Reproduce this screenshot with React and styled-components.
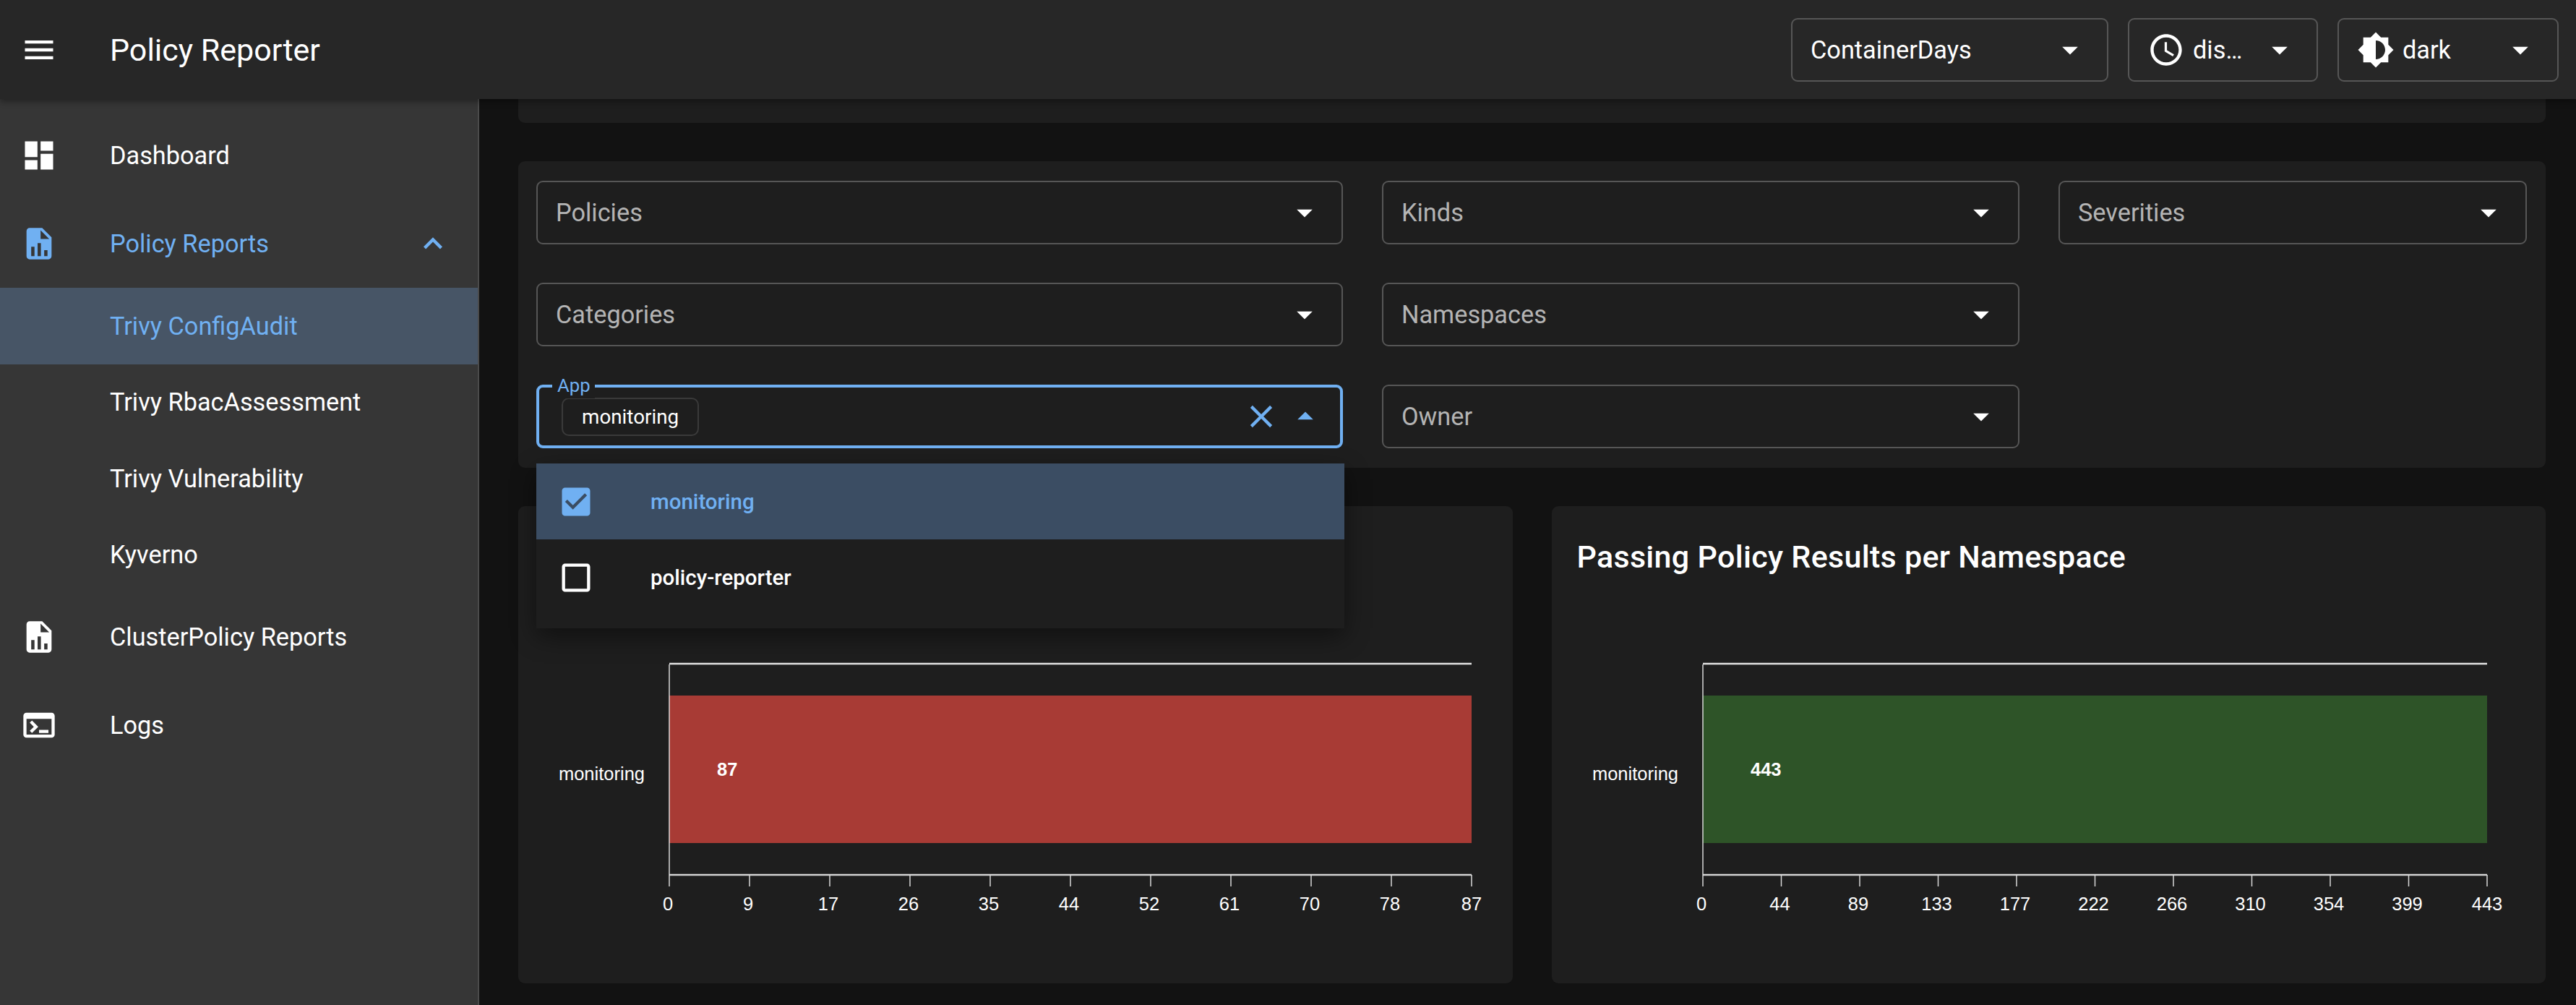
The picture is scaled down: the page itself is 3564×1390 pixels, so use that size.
import React from 'react';
import { styled, createGlobalStyle } from 'styled-components';

const BLUE = '#70b0f2';

const GlobalStyle = createGlobalStyle`
  html, body {
    margin: 0;
    padding: 0;
    height: 100%;
    background: #121212;
  }
  body {
    font-family: Roboto, "Liberation Sans", sans-serif;
    color: #fff;
    overflow: hidden;
  }
`;

const Page = styled.div`
  display: flex;
  flex-direction: column;
  height: 1390px;
  overflow: hidden;
`;

const AppBar = styled.header`
  position: relative;
  z-index: 3;
  flex: none;
  height: 137px;
  display: flex;
  align-items: center;
  padding: 0 24px 0 28px;
  box-sizing: border-box;
  background: #272727;
  box-shadow: 0 4px 8px rgba(0, 0, 0, 0.35);
`;

const AppTitle = styled.h1`
  flex: 1;
  margin: 0 0 0 72px;
  font-size: 43px;
  font-weight: 400;
  line-height: 52px;
`;

const TopSelects = styled.div`
  display: flex;
  gap: 27px;
`;

const Field = styled.div`
  position: relative;
  display: flex;
  align-items: center;
  box-sizing: border-box;
  height: 88px;
  padding: 0 0 0 25px;
  border: 2px solid #565656;
  border-radius: 9px;
  font-size: 34.3px;
  color: ${(p) => (p.$placeholder ? '#b4b4b4' : '#fff')};
  background: transparent;
  grid-column: ${(p) => (p.$span ? `span ${p.$span}` : 'auto')};
  width: ${(p) => (p.$width ? `${p.$width}px` : 'auto')};
`;

const FocusField = styled(Field)`
  border: 4px solid ${BLUE};
  padding-left: 31px;
  z-index: 2;
`;

const FieldText = styled.span`
  flex: 1;
  white-space: nowrap;
`;

const FieldIcon = styled.svg`
  flex: none;
  width: 52px;
  height: 52px;
  margin-right: ${(p) => p.$gap || 0}px;
  fill: ${(p) => p.$color || '#fff'};
`;

const Notch = styled.span`
  position: absolute;
  top: -21px;
  left: 18px;
  padding: 0 6px 0 7px;
  background: #1e1e1e;
  font-size: 25.7px;
  line-height: 36px;
  color: ${BLUE};
`;

const Chip = styled.span`
  display: inline-flex;
  align-items: center;
  box-sizing: border-box;
  height: 53px;
  padding: 0 26px;
  border: 2px solid #3a3a3a;
  border-radius: 10px;
  font-size: 27.8px;
  color: #fff;
`;

const Body = styled.div`
  flex: 1;
  display: flex;
  min-height: 0;
`;

const Sidebar = styled.nav`
  flex: none;
  box-sizing: border-box;
  width: 663px;
  padding-top: 17px;
  background: #363636;
  border-right: 2px solid #4b4b4b;
`;

const NavItem = styled.div`
  display: flex;
  align-items: center;
  height: 122px;
  padding-left: 28px;
  font-size: 34.3px;
  color: ${(p) => (p.$active ? BLUE : '#fff')};
`;

const NavIcon = styled.svg`
  flex: none;
  width: 52px;
  height: 52px;
  margin-right: 72px;
  fill: currentColor;
`;

const NavLabel = styled.span`
  flex: 1;
`;

const Chevron = styled.svg`
  flex: none;
  width: 52px;
  height: 52px;
  margin-right: 36px;
  fill: currentColor;
`;

const SubItem = styled.div`
  display: flex;
  align-items: center;
  height: 105.5px;
  padding-left: 152px;
  font-size: 34.3px;
  color: ${(p) => (p.$active ? BLUE : '#fff')};
  background: ${(p) => (p.$active ? '#475566' : 'transparent')};
`;

const Main = styled.main`
  flex: 1;
  min-width: 0;
  display: flex;
  flex-direction: column;
  gap: 53px;
  padding: 0 42px 0 54px;
`;

const CutPanel = styled.div`
  flex: none;
  height: 33px;
  background: #1e1e1e;
  border-radius: 0 0 9px 9px;
`;

const FilterPanel = styled.section`
  flex: none;
  display: grid;
  grid-template-columns: repeat(12, 1fr);
  gap: 53px 54px;
  padding: 27px 26px 27px 25px;
  background: #1e1e1e;
  border-radius: 9px;
`;

const Spacer = styled.div`
  grid-column: span 3;
`;

const AppFilter = styled.div`
  position: relative;
  grid-column: span 5;
  display: flex;
  flex-direction: column;
`;

const Dropdown = styled.div`
  position: absolute;
  z-index: 5;
  top: 109px;
  left: 0;
  right: -2px;
  padding-bottom: 18px;
  background: #1e1e1e;
  box-shadow: 0 11px 32px rgba(0, 0, 0, 0.45);
`;

const Option = styled.div`
  display: flex;
  align-items: center;
  height: 105px;
  padding-left: 29px;
  font-size: 29.5px;
  font-weight: 500;
  color: ${(p) => (p.$selected ? BLUE : '#fff')};
  background: ${(p) => (p.$selected ? '#3b4d63' : 'transparent')};
`;

const CheckIcon = styled.svg`
  flex: none;
  width: 52px;
  height: 52px;
  margin-right: 77px;
  fill: currentColor;
`;

const Charts = styled.div`
  flex: none;
  display: grid;
  grid-template-columns: 1fr 1fr;
  gap: 54px;
`;

const Card = styled.section`
  height: 660px;
  background: #1e1e1e;
  border-radius: 9px;
`;

const CardTitle = styled.h2`
  margin: 0;
  padding: 44px 35px 86px;
  font-size: 43px;
  font-weight: 500;
  line-height: 52px;
  letter-spacing: 0.3px;
`;

const ChartSvg = styled.svg`
  display: block;
  font-family: "Liberation Sans", Arial, sans-serif;
`;

const ICONS = {
  menu: 'M3 18h18v-2H3v2zm0-5h18v-2H3v2zm0-7v2h18V6H3z',
  dashboard: 'M3 13h8V3H3v10zm0 8h8v-6H3v6zm10 0h8V11h-8v10zm0-18v6h8V3h-8z',
  report:
    'M14 2H6c-1.1 0-2 .9-2 2v16c0 1.1.9 2 2 2h12c1.1 0 2-.9 2-2V8l-6-6zM13 9V3.5L18.5 9H13zM7 20v-6h2.1v6H7zm4.1 0v-8.4h2.1V20h-2.1zm4.2 0v-3.8h2.1V20h-2.1z',
  terminal:
    'M20 4H4c-1.11 0-2 .9-2 2v12c0 1.1.89 2 2 2h16c1.1 0 2-.9 2-2V6c0-1.1-.9-2-2-2zm0 14H4V8h16v10zm-2-1h-6v-2h6v2zM7.5 17l-1.41-1.41L8.67 13l-2.59-2.59L7.5 9l4 4-4 4z',
  expandLess: 'M12 8l-6 6 1.41 1.41L12 10.83l4.59 4.58L18 14z',
  down: 'M7 10l5 5 5-5z',
  up: 'M7 14l5-5 5 5z',
  close:
    'M19 6.41 17.59 5 12 10.59 6.41 5 5 6.41 10.59 12 5 17.59 6.41 19 12 13.41 17.59 19 19 17.59 13.41 12z',
  clock:
    'M11.99 2C6.47 2 2 6.48 2 12s4.47 10 9.99 10C17.52 22 22 17.52 22 12S17.52 2 11.99 2zM12 20c-4.42 0-8-3.58-8-8s3.58-8 8-8 8 3.58 8 8-3.58 8-8 8zm.5-13H11v6l5.25 3.15.75-1.23-4.5-2.67z',
  brightness:
    'M20 15.31 23.31 12 20 8.69V4h-4.69L12 .69 8.69 4H4v4.69L.69 12 4 15.31V20h4.69L12 23.31 15.31 20H20v-4.69zM12 18V6c3.31 0 6 2.69 6 6s-2.69 6-6 6z',
  checked:
    'M19 3H5c-1.11 0-2 .9-2 2v14c0 1.1.89 2 2 2h14c1.11 0 2-.89 2-2V5c0-1.11-.89-2-2-2zm-9 14l-5-5 1.41-1.41L10 14.17l7.59-7.59L19 8l-9 9z',
  unchecked:
    'M19 5v14H5V5h14m0-2H5c-1.1 0-2 .9-2 2v14c0 1.1.9 2 2 2h14c1.1 0 2-.9 2-2V5c0-1.1-.9-2-2-2z',
};

const Path = ({ name }) => <path fillRule="evenodd" d={ICONS[name]} />;

function SelectBox({ label, icon, width, span, placeholder }) {
  return (
    <Field $width={width} $span={span} $placeholder={placeholder}>
      {icon && (
        <FieldIcon viewBox="0 0 24 24" $gap={11}>
          <Path name={icon} />
        </FieldIcon>
      )}
      <FieldText>{label}</FieldText>
      <FieldIcon viewBox="0 0 24 24" $gap={25}>
        <Path name="down" />
      </FieldIcon>
    </Field>
  );
}

function BarChart({ plotRight, max, ticks, value, color }) {
  const left = 209;
  const step = (plotRight - left) / (ticks.length - 1);
  return (
    <ChartSvg width="100%" height="478">
      <rect x={left} y={80} width={plotRight - left} height={204} fill={color} />
      <line x1={left} x2={plotRight} y1={36} y2={36} stroke="#e4e4e4" strokeWidth="2.5" />
      <line x1={left} x2={plotRight} y1={328} y2={328} stroke="#d4d4d4" strokeWidth="2.5" />
      <line x1={left} x2={left} y1={37} y2={328} stroke="#d8d8d8" strokeWidth="1.5" />
      <text x={175} y={197} textAnchor="end" fontSize="25.5" fill="#fff">
        monitoring
      </text>
      <text x={left + 66} y={191} fontSize="25.5" fontWeight="700" fill="#fff">
        {max}
      </text>
      {ticks.map((t, i) => (
        <g key={t}>
          <line
            x1={left + i * step}
            x2={left + i * step}
            y1={328}
            y2={344}
            stroke="#d8d8d8"
            strokeWidth="1.5"
          />
          <text
            x={left + i * step - (i === ticks.length - 1 ? 0 : 2)}
            y={377}
            textAnchor="middle"
            fontSize="25.5"
            fill="#fff"
          >
            {t}
          </text>
        </g>
      ))}
    </ChartSvg>
  );
}

export default function App() {
  return (
    <Page>
      <GlobalStyle />
      <AppBar>
        <FieldIcon viewBox="0 0 24 24">
          <Path name="menu" />
        </FieldIcon>
        <AppTitle>Policy Reporter</AppTitle>
        <TopSelects>
          <SelectBox label="ContainerDays" width={439} />
          <SelectBox label="dis…" icon="clock" width={263} />
          <SelectBox label="dark" icon="brightness" width={306} />
        </TopSelects>
      </AppBar>
      <Body>
        <Sidebar>
          <NavItem>
            <NavIcon viewBox="0 0 24 24">
              <Path name="dashboard" />
            </NavIcon>
            <NavLabel>Dashboard</NavLabel>
          </NavItem>
          <NavItem $active>
            <NavIcon viewBox="0 0 24 24">
              <Path name="report" />
            </NavIcon>
            <NavLabel>Policy Reports</NavLabel>
            <Chevron viewBox="0 0 24 24">
              <Path name="expandLess" />
            </Chevron>
          </NavItem>
          <SubItem $active>Trivy ConfigAudit</SubItem>
          <SubItem>Trivy RbacAssessment</SubItem>
          <SubItem>Trivy Vulnerability</SubItem>
          <SubItem>Kyverno</SubItem>
          <NavItem>
            <NavIcon viewBox="0 0 24 24">
              <Path name="report" />
            </NavIcon>
            <NavLabel>ClusterPolicy Reports</NavLabel>
          </NavItem>
          <NavItem>
            <NavIcon viewBox="0 0 24 24">
              <Path name="terminal" />
            </NavIcon>
            <NavLabel>Logs</NavLabel>
          </NavItem>
        </Sidebar>
        <Main>
          <CutPanel />
          <FilterPanel>
            <SelectBox label="Policies" span={5} placeholder />
            <SelectBox label="Kinds" span={4} placeholder />
            <SelectBox label="Severities" span={3} placeholder />
            <SelectBox label="Categories" span={5} placeholder />
            <SelectBox label="Namespaces" span={4} placeholder />
            <Spacer />
            <AppFilter>
              <FocusField>
                <Notch>App</Notch>
                <FieldText>
                  <Chip>monitoring</Chip>
                </FieldText>
                <FieldIcon viewBox="0 0 24 24" $color={BLUE} $gap={9}>
                  <Path name="close" />
                </FieldIcon>
                <FieldIcon viewBox="0 0 24 24" $color={BLUE} $gap={22}>
                  <Path name="up" />
                </FieldIcon>
              </FocusField>
              <Dropdown>
                <Option $selected>
                  <CheckIcon viewBox="0 0 24 24">
                    <Path name="checked" />
                  </CheckIcon>
                  monitoring
                </Option>
                <Option>
                  <CheckIcon viewBox="0 0 24 24">
                    <Path name="unchecked" />
                  </CheckIcon>
                  policy-reporter
                </Option>
              </Dropdown>
            </AppFilter>
            <SelectBox label="Owner" span={4} placeholder />
          </FilterPanel>
          <Charts>
            <Card>
              <CardTitle>Failing Policy Results per Namespace</CardTitle>
              <BarChart
                plotRight={1319}
                max={87}
                ticks={[0, 9, 17, 26, 35, 44, 52, 61, 70, 78, 87]}
                color="#a83b35"
              />
            </Card>
            <Card>
              <CardTitle>Passing Policy Results per Namespace</CardTitle>
              <BarChart
                plotRight={1294}
                max={443}
                ticks={[0, 44, 89, 133, 177, 222, 266, 310, 354, 399, 443]}
                color="#2e5428"
              />
            </Card>
          </Charts>
        </Main>
      </Body>
    </Page>
  );
}
